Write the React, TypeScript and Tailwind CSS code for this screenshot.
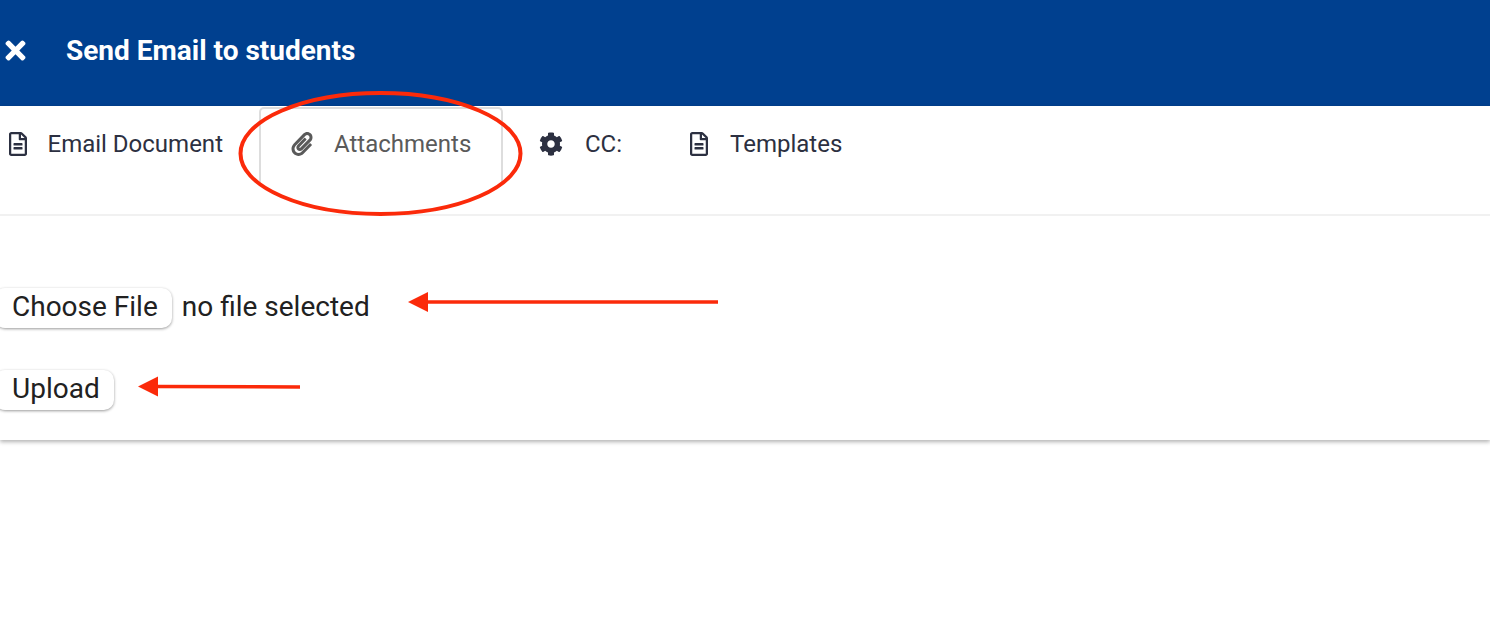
import React from "react";
import { FaTimes, FaRegFileAlt, FaPaperclip, FaCog } from "react-icons/fa";

function Tab({ icon, label, className }: { icon: React.ReactNode; label: string; className: string }) {
  return (
    <div className={`flex items-start h-[76px] pt-[20px] border border-transparent text-[#2c3041] text-[24px] leading-[32px] ${className}`}>
      <span className="w-[24px] h-[32px] flex items-center justify-center shrink-0">{icon}</span>
      <span>{label}</span>
    </div>
  );
}

export default function App() {
  return (
    <div className="relative w-[1490px] h-[622px] overflow-hidden bg-white font-['Roboto',sans-serif]">
      <header className="h-[106px] bg-[#00408f] flex items-center pb-[5px] text-white">
        <FaTimes className="ml-[5px] w-[21px] h-[29px] shrink-0" />
        <h1 className="ml-[40px] text-[28px] font-bold leading-none">Send Email to students</h1>
      </header>

      <section className="shadow-[0_2px_4px_rgba(0,0,0,0.3)] h-[334px]">
        <nav className="flex h-[110px] border-b-2 border-[#f1f1f1] pt-px">
          <Tab className="pl-[5px] w-[259px] gap-[17.5px]" icon={<FaRegFileAlt className="w-[18px] h-[24px]" />} label="Email Document" />
          <div className="flex items-start w-[244px] h-[76px] pt-[19px] pl-[29px] gap-[20px] text-[#5a5a5a] text-[24px] leading-[32px] border-2 border-b-0 border-[#dddddd] rounded-t-[5px]">
            <span className="w-[24px] h-[32px] flex items-center justify-center shrink-0"><FaPaperclip className="w-[24px] h-[24px]" /></span>
            <span>Attachments</span>
          </div>
          <Tab className="pl-[35px] w-[183px] gap-[22px]" icon={<FaCog className="w-[24px] h-[24px]" />} label="CC:" />
          <Tab className="gap-[19px]" icon={<FaRegFileAlt className="w-[18px] h-[24px]" />} label="Templates" />
        </nav>

        <div className="pt-[72px] flex flex-col gap-[42px] text-[28px] leading-none text-[#212121]">
          <div className="flex items-center gap-[10px] h-[40px]">
            <button className="h-[40px] -ml-[5px] pl-[17px] pr-[14px] pb-[2px] bg-white rounded-[10px] shadow-[0_1px_3px_rgba(0,0,0,0.4)]">Choose File</button>
            <span className="pb-[2px]">no file selected</span>
          </div>
          <div className="h-[40px]">
            <button className="h-[40px] -ml-[5px] pl-[17px] pr-[14px] pb-[2px] bg-white rounded-[10px] shadow-[0_1px_3px_rgba(0,0,0,0.4)]">Upload</button>
          </div>
        </div>
      </section>

      <svg className="absolute inset-0 pointer-events-none" width="1490" height="622" viewBox="0 0 1490 622" fill="none">
        <ellipse cx="380.5" cy="153.5" rx="140" ry="60.5" stroke="#fb2a0a" strokeWidth="4" />
        <path d="M718 302H426" stroke="#fb2a0a" strokeWidth="3.5" />
        <path d="M408 302L428 292V312Z" fill="#fb2a0a" />
        <path d="M300 387L156 386.5" stroke="#fb2a0a" strokeWidth="3.5" />
        <path d="M138 386.5L158 376.5V396.5Z" fill="#fb2a0a" />
      </svg>
    </div>
  );
}
